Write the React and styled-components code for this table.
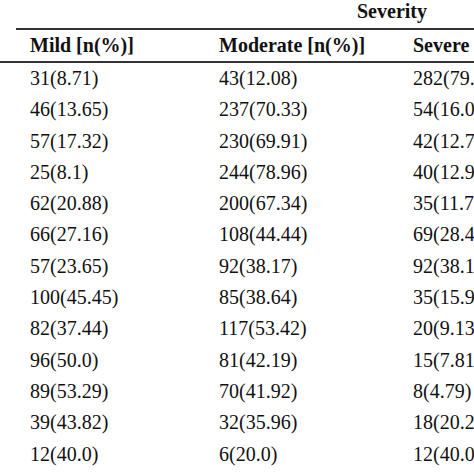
import React from "react";
import styled, { createGlobalStyle } from "styled-components";

const rows = [
  ["31(8.71)", "43(12.08)", "282(79.21)"],
  ["46(13.65)", "237(70.33)", "54(16.02)"],
  ["57(17.32)", "230(69.91)", "42(12.77)"],
  ["25(8.1)", "244(78.96)", "40(12.94)"],
  ["62(20.88)", "200(67.34)", "35(11.78)"],
  ["66(27.16)", "108(44.44)", "69(28.40)"],
  ["57(23.65)", "92(38.17)", "92(38.17)"],
  ["100(45.45)", "85(38.64)", "35(15.91)"],
  ["82(37.44)", "117(53.42)", "20(9.13)"],
  ["96(50.0)", "81(42.19)", "15(7.81)"],
  ["89(53.29)", "70(41.92)", "8(4.79)"],
  ["39(43.82)", "32(35.96)", "18(20.22)"],
  ["12(40.0)", "6(20.0)", "12(40.0)"],
];

const GlobalStyle = createGlobalStyle`
  html, body {
    margin: 0;
    padding: 0;
    background: #fff;
  }
  body {
    font-family: "Liberation Serif", "Times New Roman", serif;
    color: #111;
  }
`;

const Frame = styled.div`
  width: 474px;
  height: 474px;
  overflow: hidden;
`;

const Table = styled.table`
  width: 660px;
  border-collapse: collapse;
  table-layout: fixed;
  font-size: 20px;
`;

const Cell = styled.td`
  padding: 0;
  padding-left: ${(p) => (p.$first ? "30px" : "0")};
  white-space: nowrap;
  overflow: hidden;
  text-align: left;
  font-weight: ${(p) => (p.$bold ? "bold" : "normal")};
`;

const GroupCell = styled.td`
  padding: 0;
`;

const GroupLabel = styled.div`
  margin-left: 16px;
  padding: 0 0 6px 341px;
  border-bottom: 2px solid #333;
  font-weight: bold;
  line-height: 22px;
`;

const HeadRow = styled.tr`
  height: 32px;
  line-height: 24px;
  border-bottom: 2px solid #333;
  td {
    vertical-align: top;
    padding-top: 3px;
  }
`;

const DataRow = styled.tr`
  height: 31.3px;
  line-height: 31.3px;
`;

export default function App() {
  return (
    <Frame>
      <GlobalStyle />
      <Table>
        <colgroup>
          <col style={{ width: 219 }} />
          <col style={{ width: 194 }} />
          <col style={{ width: 247 }} />
        </colgroup>
        <tbody>
          <tr>
            <GroupCell colSpan={3}>
              <GroupLabel>Severity</GroupLabel>
            </GroupCell>
          </tr>
          <HeadRow>
            <Cell $first $bold>Mild [n(%)]</Cell>
            <Cell $bold>Moderate [n(%)]</Cell>
            <Cell $bold>Severe [n(%)]</Cell>
          </HeadRow>
          {rows.map((r, i) => (
            <DataRow key={i}>
              <Cell $first>{r[0]}</Cell>
              <Cell>{r[1]}</Cell>
              <Cell>{r[2]}</Cell>
            </DataRow>
          ))}
        </tbody>
      </Table>
    </Frame>
  );
}
